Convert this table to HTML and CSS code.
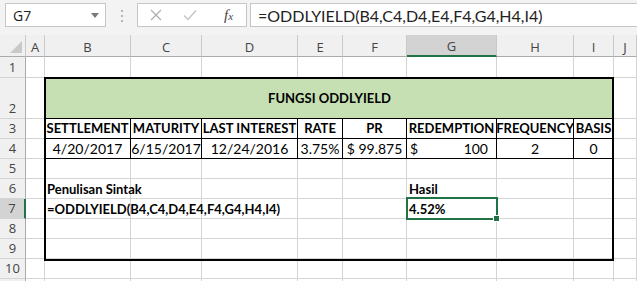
FILE: index.html
```html
<!DOCTYPE html>
<html lang="en">
<head>
    <meta charset="UTF-8">
    <title>Fungsi ODDLYIELD</title>
    <link rel="stylesheet" href="styles.css">
</head>
<body>

<!-- Formula bar -->
<div class="formula-bar">
    <div class="name-box">
        <span>G7</span>
        <svg class="drop" width="8" height="5" viewBox="0 0 8 5"><path d="M0 0h8L4 5z" fill="#7a7a7a"/></svg>
    </div>
    <svg class="grip" width="3" height="12" viewBox="0 0 3 12">
        <rect x="0" y="0" width="2" height="2" fill="#b4b4b4"/>
        <rect x="0" y="5" width="2" height="2" fill="#b4b4b4"/>
        <rect x="0" y="10" width="2" height="2" fill="#b4b4b4"/>
    </svg>
    <div class="fx-box">
        <svg width="12" height="12" viewBox="0 0 12 12"><path d="M1 1l10 10M11 1L1 11" stroke="#b0b0b0" stroke-width="1.3" fill="none"/></svg>
        <svg width="14" height="12" viewBox="0 0 14 12"><path d="M1 6.5l4 4L13 1.5" stroke="#c4c4c4" stroke-width="1.4" fill="none"/></svg>
        <span class="fx">f<small>x</small></span>
    </div>
    <div class="formula-input">=ODDLYIELD(B4,C4,D4,E4,F4,G4,H4,I4)</div>
</div>

<!-- Sheet -->
<div class="sheet">
    <!-- column headers -->
    <div class="corner"><svg width="12" height="12" viewBox="0 0 12 12"><path d="M12 0v12H0z" fill="#c9c9c9"/></svg></div>
    <div class="col-head">A</div>
    <div class="col-head">B</div>
    <div class="col-head">C</div>
    <div class="col-head">D</div>
    <div class="col-head">E</div>
    <div class="col-head">F</div>
    <div class="col-head active">G</div>
    <div class="col-head">H</div>
    <div class="col-head">I</div>
    <div class="col-head">J</div>

    <!-- row headers -->
    <div class="row-head r1">1</div>
    <div class="row-head r2">2</div>
    <div class="row-head r3">3</div>
    <div class="row-head r4">4</div>
    <div class="row-head r5">5</div>
    <div class="row-head r6">6</div>
    <div class="row-head r7 active">7</div>
    <div class="row-head r8">8</div>
    <div class="row-head r9">9</div>
    <div class="row-head r10">10</div>
    <div class="row-head r11"></div>

    <!-- gridlines -->
    <div class="vline cA"></div>
    <div class="vline cB"></div>
    <div class="vline cC"></div>
    <div class="vline cD"></div>
    <div class="vline cE"></div>
    <div class="vline cF"></div>
    <div class="vline cG"></div>
    <div class="vline cH"></div>
    <div class="vline cI"></div>
    <div class="vline cJ"></div>
    <div class="hline r1"></div>
    <div class="hline r2"></div>
    <div class="hline r3"></div>
    <div class="hline r4"></div>
    <div class="hline r5"></div>
    <div class="hline r6"></div>
    <div class="hline r7"></div>
    <div class="hline r8"></div>
    <div class="hline r9"></div>
    <div class="hline r10"></div>

    <!-- table -->
    <div class="title">FUNGSI ODDLYIELD</div>

    <div class="cell head cB r3">SETTLEMENT</div>
    <div class="cell head cC r3">MATURITY</div>
    <div class="cell head cD r3">LAST INTEREST</div>
    <div class="cell head cE r3">RATE</div>
    <div class="cell head cF r3">PR</div>
    <div class="cell head cG r3">REDEMPTION</div>
    <div class="cell head cH r3">FREQUENCY</div>
    <div class="cell head cI r3">BASIS</div>

    <div class="cell val cB r4">4/20/2017</div>
    <div class="cell val cC r4">6/15/2017</div>
    <div class="cell val cD r4">12/24/2016</div>
    <div class="cell val cE r4">3.75%</div>
    <div class="cell val cF r4">$ 99.875</div>
    <div class="cell val money cG r4"><span>$</span><span>100</span></div>
    <div class="cell val cH r4">2</div>
    <div class="cell val cI r4">0</div>

    <div class="cell label cB r6">Penulisan Sintak</div>
    <div class="cell label cB r7">=ODDLYIELD(B4,C4,D4,E4,F4,G4,H4,I4)</div>
    <div class="cell label cG r6">Hasil</div>
    <div class="cell label cG r7">4.52%</div>

    <div class="frame"></div>
    <div class="selected"></div>
</div>

</body>
</html>
```

FILE: styles.css
```css
body {
    margin: 0;
    padding: 0;
    width: 637px;
    height: 281px;
    overflow: hidden;
    background: #fff;
    font-family: Lato, "Liberation Sans", sans-serif;
}

/* formula bar */
.formula-bar {
    height: 35px;
    background: #f3f3f3;
    display: flex;
    align-items: flex-start;
    padding: 3px 0 0 5px;
    box-sizing: border-box;
}
.name-box,
.fx-box,
.formula-input {
    height: 24px;
    box-sizing: border-box;
    background: #fff;
    border: 1px solid #c6c6c6;
    display: flex;
    align-items: center;
}
.name-box {
    width: 101px;
    padding: 0 6px 0 7px;
    justify-content: space-between;
    font-family: "Open Sans", sans-serif;
    font-size: 14px;
    color: #222;
}
.grip {
    margin: 7px 0 0 15px;
}
.fx-box {
    width: 110px;
    margin-left: 13px;
    padding-left: 12px;
    gap: 21px;
}
.fx {
    font-family: "Liberation Serif", serif;
    font-style: italic;
    font-size: 15px;
    color: #444;
    margin-left: 6px;
}
.fx small {
    font-size: 11px;
}
.formula-input {
    flex: 1;
    margin-left: 3px;
    border-right: none;
    padding-left: 7px;
    font-size: 16px;
    color: #222;
}

/* sheet grid */
.sheet {
    display: grid;
    grid-template-columns: 26px 19px 86px 71px 96px 45px 64px 90px 77px 40px 1fr;
    grid-template-rows: 22px 21px 41px 20px 20px 20px 20px 20px 20px 20px 20px 4px;
    height: 246px;
    overflow: hidden;
    font-size: 14px;
    color: #000;
}
.corner,
.col-head,
.row-head {
    background: #f0f0f0;
    color: #444;
    font-family: "Open Sans", sans-serif;
    font-size: 13px;
    box-sizing: border-box;
}
.corner {
    grid-row: 1;
    grid-column: 1;
    border-right: 1px solid #c9c9c9;
    border-bottom: 1px solid #ababab;
    display: flex;
    align-items: flex-end;
    justify-content: flex-end;
    padding: 0 3px 3px 0;
}
.col-head {
    grid-row: 1;
    border-right: 1px solid #c9c9c9;
    border-bottom: 1px solid #ababab;
    display: flex;
    align-items: center;
    justify-content: center;
    padding-top: 2px;
}
.col-head.active {
    background: #d3d3d3;
    border-bottom: 2px solid #217346;
}
.row-head {
    grid-column: 1;
    border-right: 1px solid #ababab;
    border-bottom: 1px solid #d4d4d4;
    display: flex;
    align-items: flex-end;
    justify-content: center;
    padding-bottom: 1px;
}
.row-head.active {
    background: #d3d3d3;
    border-right: 2px solid #217346;
}

/* gridlines */
.vline {
    grid-row: 2 / -1;
    border-right: 1px solid #d4d4d4;
}
.hline {
    grid-column: 2 / -1;
    border-bottom: 1px solid #d4d4d4;
}

/* column and row placement */
.cA { grid-column: 2; }
.cB { grid-column: 3; }
.cC { grid-column: 4; }
.cD { grid-column: 5; }
.cE { grid-column: 6; }
.cF { grid-column: 7; }
.cG { grid-column: 8; }
.cH { grid-column: 9; }
.cI { grid-column: 10; }
.cJ { grid-column: 11; }
.r1 { grid-row: 2; }
.r2 { grid-row: 3; }
.r3 { grid-row: 4; }
.r4 { grid-row: 5; }
.r5 { grid-row: 6; }
.r6 { grid-row: 7; }
.r7 { grid-row: 8; }
.r8 { grid-row: 9; }
.r9 { grid-row: 10; }
.r10 { grid-row: 11; }
.r11 { grid-row: 12; }

/* table content */
.title {
    grid-column: 3 / 11;
    grid-row: 3;
    background: #c6e0b4;
    border-bottom: 1px solid #000;
    display: flex;
    align-items: center;
    justify-content: center;
    font-weight: bold;
    font-size: 13px;
}
.cell {
    display: flex;
    align-items: flex-end;
    padding: 0 2px 1px;
    white-space: nowrap;
    box-sizing: border-box;
    position: relative;
    z-index: 1;
}
.head,
.val {
    justify-content: center;
    border-right: 1px solid #000;
    border-bottom: 1px solid #000;
    background: #fff;
}
.head,
.label {
    font-weight: bold;
    font-size: 13px;
    padding-bottom: 2px;
}
.money {
    justify-content: space-between;
    padding: 0 8px 1px 3px;
}

.frame {
    grid-column: 3 / 11;
    grid-row: 3 / 11;
    border: 2px solid #000;
    margin: -1px 0 -2px -1px;
    z-index: 2;
}
.selected {
    grid-column: 8;
    grid-row: 8;
    border: 2px solid #217346;
    margin: -2px -1px -1px -1px;
    position: relative;
    z-index: 3;
}
.selected::after {
    content: "";
    position: absolute;
    right: -4px;
    bottom: -4px;
    width: 5px;
    height: 5px;
    background: #217346;
    border: 1px solid #fff;
}
```
